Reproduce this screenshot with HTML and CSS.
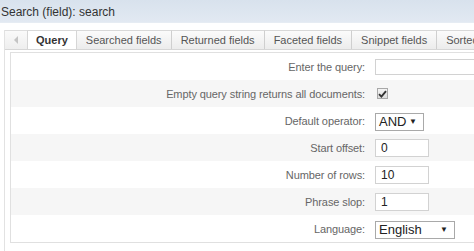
FILE: index.html
```html
<!DOCTYPE html>
<html>
<head>
    <title>Search (field): search</title>
    <link rel="stylesheet" href="styles.css">
</head>
<body>
    <div class="header">Search (field): search</div>

    <div class="tabs-panel">
        <div class="tab-bar">
            <div class="tab-arrow">
                <svg width="6" height="8" viewBox="0 0 6 8"><path d="M5 0 L1 4 L5 8 Z" fill="#c4c4c4"/></svg>
            </div>
            <div class="tab active">Query</div>
            <div class="tab">Searched fields</div>
            <div class="tab">Returned fields</div>
            <div class="tab">Faceted fields</div>
            <div class="tab">Snippet fields</div>
            <div class="tab last">Sorted</div>
        </div>

        <div class="form-box">
            <div class="row">
                <label class="label">Enter the query:</label>
                <div class="field"><input type="text" class="input wide"></div>
            </div>
            <div class="row alt">
                <label class="label">Empty query string returns all documents:</label>
                <div class="field">
                    <span class="checkbox">
                        <svg width="9" height="8" viewBox="0 0 9 8"><path d="M1 4.2 L3.4 6.6 L8 1.2" fill="none" stroke="#333" stroke-width="1.9"/></svg>
                    </span>
                </div>
            </div>
            <div class="row">
                <label class="label">Default operator:</label>
                <div class="field">
                    <div class="select op"><span>AND</span><span class="caret">&#9660;</span></div>
                </div>
            </div>
            <div class="row alt">
                <label class="label">Start offset:</label>
                <div class="field"><input type="text" class="input short" value="0"></div>
            </div>
            <div class="row">
                <label class="label">Number of rows:</label>
                <div class="field"><input type="text" class="input short" value="10"></div>
            </div>
            <div class="row alt">
                <label class="label">Phrase slop:</label>
                <div class="field"><input type="text" class="input short" value="1"></div>
            </div>
            <div class="row">
                <label class="label">Language:</label>
                <div class="field">
                    <div class="select lang"><span>English</span><span class="caret">&#9660;</span></div>
                </div>
            </div>
        </div>
    </div>
</body>
</html>
```

FILE: styles.css
```css
* {
    margin: 0;
    padding: 0;
    box-sizing: border-box;
}

body {
    font-family: "Liberation Sans", Arial, sans-serif;
    background: white;
    color: #333;
    width: 474px;
    height: 251px;
    overflow: hidden;
}

.header {
    height: 23px;
    line-height: 24px;
    padding-left: 1px;
    font-size: 12px;
    color: #333;
    background: linear-gradient(to bottom, #d8e2ed 0%, #e2e9f2 100%);
    border-bottom: 1px solid #e6ecf3;
}

.tabs-panel {
    margin: 7px 0 0 4px;
    border-left: 1px solid #e2e2e2;
    height: 230px;
}

.tab-bar {
    display: flex;
    height: 20px;
    border-bottom: 1px solid #d6d6d6;
    white-space: nowrap;
    overflow: hidden;
}

.tab-arrow {
    flex-shrink: 0;
    width: 23px;
    display: flex;
    align-items: center;
    justify-content: center;
    background: linear-gradient(to bottom, #fafafa, #eeeeee);
    border-top: 1px solid #dddddd;
    border-right: 1px solid #d6d6d6;
}

.tab {
    flex-shrink: 0;
    font-size: 11px;
    line-height: 19px;
    color: #555;
    padding: 0 9px;
    background: linear-gradient(to bottom, #fbfbfb, #ececec);
    border-top: 1px solid #d8d8d8;
    border-right: 1px solid #cfcfcf;
}

.tab.active {
    background: white;
    color: #333;
    font-weight: bold;
    padding: 0 8px;
    height: 21px;
    border-right: 1px solid #d6d6d6;
}

.tab.last {
    border-right: none;
}

.form-box {
    margin: 2px 0 0 5px;
    border: 1px solid #e0e0e0;
    border-right: none;
}

.row {
    display: grid;
    grid-template-columns: 354px 1fr;
    align-items: center;
    height: 27px;
}

.row.alt {
    background: #f6f6f6;
}

.label {
    text-align: right;
    font-size: 11px;
    letter-spacing: -0.1px;
    color: #666;
}

.field {
    padding-left: 10px;
    display: flex;
    align-items: center;
}

.input {
    height: 18px;
    border: 1px solid #d2d2d2;
    font-family: "Liberation Sans", Arial, sans-serif;
    font-size: 12px;
    color: #222;
    padding: 0 5px;
    background: white;
}

.input.wide {
    width: 120px;
    height: 16px;
}

.input.short {
    width: 54px;
}

.checkbox {
    width: 11px;
    height: 11px;
    margin-left: 2px;
    border: 1px solid #a8a8a8;
    background: linear-gradient(to bottom, #f4f4f4, #dcdcdc);
    display: flex;
    align-items: center;
    justify-content: center;
}

.select {
    height: 18px;
    margin-top: 2px;
    border: 1px solid #a9a9a9;
    display: flex;
    align-items: center;
    justify-content: space-between;
    padding: 0 6px 0 3px;
    font-size: 13px;
    color: #222;
    background: white;
}

.select.op {
    width: 49px;
}

.select.lang {
    width: 80px;
}

.caret {
    font-size: 8px;
    color: #222;
}
```
